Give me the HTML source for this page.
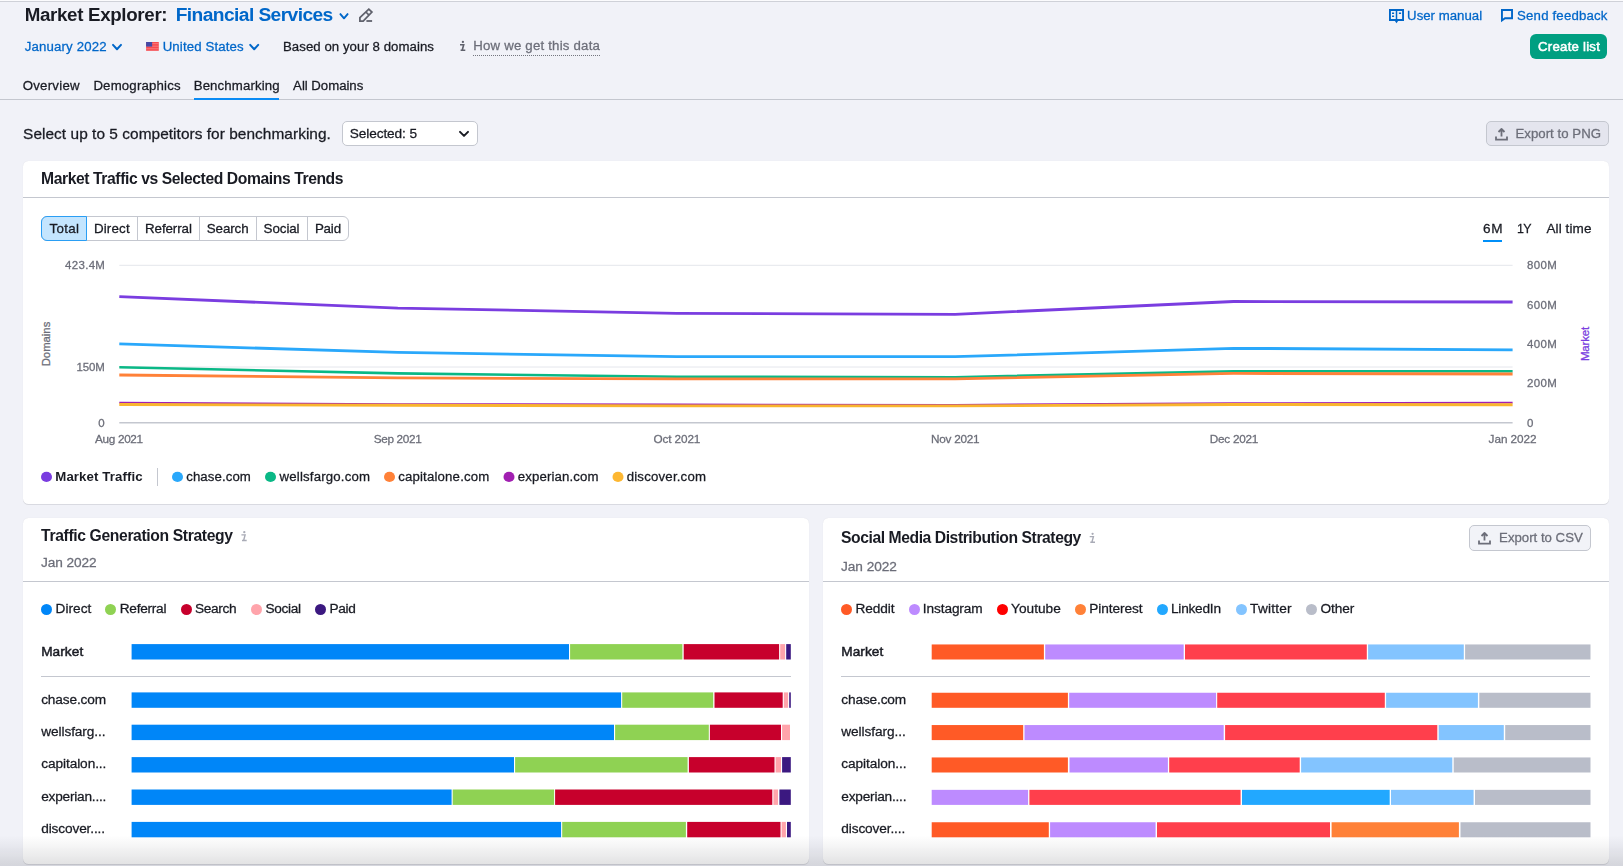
<!DOCTYPE html><html><head><meta charset="utf-8"><title>Market Explorer</title><style>
html,body{margin:0;padding:0}
body{width:1623px;height:866px;overflow:hidden;position:relative;background:#f1f2f8;font-family:"Liberation Sans",sans-serif;color:#191b23}
div,span,svg{position:absolute;box-sizing:border-box}
.t{white-space:pre;line-height:1;transform-origin:0 50%;-webkit-text-stroke:0.28px}
.card{background:#fff;border-radius:5.5px;box-shadow:0 1px 0 rgba(25,27,35,.10),0 0 1px rgba(25,27,35,.10)}
.dot{border-radius:50%;width:11px;height:11px}
</style></head><body>
<div style="left:0px;top:1px;width:1623px;height:1px;background:#cfd1d8"></div>
<div style="left:0px;top:99px;width:1623px;height:1px;background:#c4c7cf"></div>
<div style="left:194px;top:98px;width:85px;height:2px;background:#0a8bf4"></div>
<div class="card" style="left:23px;top:161px;width:1586px;height:343px"></div>
<div style="left:23px;top:197px;width:1586px;height:1px;background:#c4c7cf"></div>
<div class="card" style="left:23px;top:518px;width:786px;height:346px"></div>
<div style="left:23px;top:581px;width:786px;height:1px;background:#c4c7cf"></div>
<div class="card" style="left:823px;top:518px;width:786px;height:346px"></div>
<div style="left:823px;top:581px;width:786px;height:1px;background:#c4c7cf"></div>
<div style="left:1530px;top:34px;width:77.2px;height:24.8px;background:#009f81;border-radius:6px"></div>
<div style="left:342px;top:121px;width:136px;height:24.8px;background:#fff;border:1px solid #c4c7cf;border-radius:5px"></div>
<div style="left:1486.3px;top:121.2px;width:122.6px;height:24.5px;background:#e4e5ee;border:1px solid #c4c7cf;border-radius:5px"></div>
<div style="left:1469.3px;top:525.3px;width:121.6px;height:25.4px;background:#f2f3f8;border:1px solid #c4c7cf;border-radius:5px"></div>
<div style="left:41.3px;top:216px;width:307.4px;height:24.6px;background:#fff;border:1px solid #c4c7cf;border-radius:6px"></div>
<div style="left:137.1px;top:217px;width:1px;height:22.8px;background:#c4c7cf"></div>
<div style="left:199px;top:217px;width:1px;height:22.8px;background:#c4c7cf"></div>
<div style="left:256.2px;top:217px;width:1px;height:22.8px;background:#c4c7cf"></div>
<div style="left:307.2px;top:217px;width:1px;height:22.8px;background:#c4c7cf"></div>
<div style="left:41.3px;top:216px;width:45.7px;height:24.6px;background:#c4e5fe;border:1px solid #2a9ef4;border-radius:6px 0 0 6px"></div>
<div style="left:1483px;top:240px;width:19px;height:2px;background:#008ff8"></div>
<div style="left:473px;top:55px;width:127px;height:1px;background:repeating-linear-gradient(90deg,#74767f 0,#74767f 1px,transparent 1px,transparent 2px)"></div>
<svg width="1623" height="866" viewBox="0 0 1623 866" style="left:0;top:0">
<path d="M119.3 265.3H1512.6M119.3 367H1512.6" stroke="#e4e6ec" stroke-width="1" fill="none"/>
<path d="M119.3 422.8H1512.6" stroke="#c4c7cf" stroke-width="1.4" fill="none"/>
<polyline points="119.3,296.6 397.8,308.1 676.5,313.3 955.1,314.3 1233.6,301.5 1512.6,302" fill="none" stroke="#7a3de0" stroke-width="2.8" stroke-linejoin="round"/>
<polyline points="119.3,343.9 397.8,352.4 676.5,356.7 955.1,356.7 1233.6,348.3 1512.6,349.8" fill="none" stroke="#2aa8fb" stroke-width="2.8" stroke-linejoin="round"/>
<polyline points="119.3,367.3 397.8,373.4 676.5,376.7 955.1,377.2 1233.6,371.3 1512.6,371.3" fill="none" stroke="#0ab886" stroke-width="2.6" stroke-linejoin="round"/>
<polyline points="119.3,375 397.8,377.9 676.5,378.9 955.1,378.9 1233.6,373.4 1512.6,374" fill="none" stroke="#ff8138" stroke-width="2.8" stroke-linejoin="round"/>
<polyline points="119.3,402.6 397.8,404 676.5,404.4 955.1,404.8 1233.6,403.1 1512.6,402.6" fill="none" stroke="#a11fb1" stroke-width="1.7" stroke-linejoin="round"/>
<polyline points="119.3,404.5 397.8,405.3 676.5,405.9 955.1,405.9 1233.6,404.5 1512.6,404.7" fill="none" stroke="#f9b52e" stroke-width="2.9" stroke-linejoin="round"/>
</svg>
<span class="t" style="left:47.2px;top:343.8px;font-size:11.3px;color:#6c6e79;transform:translate(-50%,-50%) rotate(-90deg);transform-origin:50% 50%">Domains</span>
<span class="t" style="left:1585.2px;top:343.8px;font-size:11.6px;color:#7a3de0;transform:translate(-50%,-50%) rotate(-90deg);transform-origin:50% 50%;letter-spacing:-0.2px">Market</span>
<svg style="left:0;top:0" width="1623" height="866">
<ellipse cx="46.5" cy="476.9" rx="5.5" ry="5.1" fill="#7a3de0"/>
<ellipse cx="177.5" cy="476.9" rx="5.5" ry="5.1" fill="#2aa8fb"/>
<ellipse cx="270.5" cy="476.9" rx="5.5" ry="5.1" fill="#0ab886"/>
<ellipse cx="389.5" cy="476.9" rx="5.5" ry="5.1" fill="#ff8138"/>
<ellipse cx="509" cy="476.9" rx="5.5" ry="5.1" fill="#a11fb1"/>
<ellipse cx="618" cy="476.9" rx="5.5" ry="5.1" fill="#fdb731"/>
</svg>
<div style="left:157px;top:468.3px;width:1px;height:17.3px;background:#c4c7cf"></div>
<div class="dot" style="left:41px;top:603.8px;width:11px;height:11px;background:#0086f8"></div>
<div class="dot" style="left:105px;top:603.8px;width:11px;height:11px;background:#8fd253"></div>
<div class="dot" style="left:180.5px;top:603.8px;width:11px;height:11px;background:#c7002c"></div>
<div class="dot" style="left:250.8px;top:603.8px;width:11px;height:11px;background:#ffa4ab"></div>
<div class="dot" style="left:314.9px;top:603.8px;width:11px;height:11px;background:#3b1880"></div>
<div class="dot" style="left:840.9px;top:603.8px;width:11px;height:11px;background:#ff5a26"></div>
<div class="dot" style="left:908.5px;top:603.8px;width:11px;height:11px;background:#bd8bff"></div>
<div class="dot" style="left:996.9px;top:603.8px;width:11px;height:11px;background:#fe0000"></div>
<div class="dot" style="left:1075.1px;top:603.8px;width:11px;height:11px;background:#ff8138"></div>
<div class="dot" style="left:1157px;top:603.8px;width:11px;height:11px;background:#22a8ff"></div>
<div class="dot" style="left:1235.6px;top:603.8px;width:11px;height:11px;background:#83c4ff"></div>
<div class="dot" style="left:1306px;top:603.8px;width:11px;height:11px;background:#b9bdc9"></div>
<svg style="left:0;top:0" width="1623" height="866">
<rect x="131.6" y="644.1" width="437.4" height="15.4" fill="#0086f8"/>
<rect x="570.1" y="644.1" width="112.3" height="15.4" fill="#8fd253"/>
<rect x="683.7" y="644.1" width="95.4" height="15.4" fill="#c7002c"/>
<rect x="780.2" y="644.1" width="4.9" height="15.4" fill="#ffa4ab"/>
<rect x="786.2" y="644.1" width="4.6" height="15.4" fill="#3b1880"/>
<rect x="131.6" y="692.4" width="489.5" height="15.4" fill="#0086f8"/>
<rect x="622.2" y="692.4" width="91" height="15.4" fill="#8fd253"/>
<rect x="714.5" y="692.4" width="68.2" height="15.4" fill="#c7002c"/>
<rect x="783.8" y="692.4" width="4.3" height="15.4" fill="#ffa4ab"/>
<rect x="789.2" y="692.4" width="1.6" height="15.4" fill="#3b1880"/>
<rect x="131.6" y="724.7" width="482.4" height="15.4" fill="#0086f8"/>
<rect x="615.1" y="724.7" width="93.7" height="15.4" fill="#8fd253"/>
<rect x="709.9" y="724.7" width="71.1" height="15.4" fill="#c7002c"/>
<rect x="782.1" y="724.7" width="7.9" height="15.4" fill="#ffa4ab"/>
<rect x="131.6" y="757.1" width="382.4" height="15.4" fill="#0086f8"/>
<rect x="515.1" y="757.1" width="172.5" height="15.4" fill="#8fd253"/>
<rect x="688.9" y="757.1" width="85.6" height="15.4" fill="#c7002c"/>
<rect x="775.6" y="757.1" width="5.4" height="15.4" fill="#ffa4ab"/>
<rect x="782.1" y="757.1" width="8.7" height="15.4" fill="#3b1880"/>
<rect x="131.6" y="789.5" width="320" height="15.4" fill="#0086f8"/>
<rect x="452.7" y="789.5" width="101.4" height="15.4" fill="#8fd253"/>
<rect x="555.1" y="789.5" width="217.2" height="15.4" fill="#c7002c"/>
<rect x="773.4" y="789.5" width="4.6" height="15.4" fill="#ffa4ab"/>
<rect x="779.4" y="789.5" width="11.4" height="15.4" fill="#3b1880"/>
<rect x="131.6" y="821.9" width="429.5" height="15.4" fill="#0086f8"/>
<rect x="562.2" y="821.9" width="123.7" height="15.4" fill="#8fd253"/>
<rect x="687.2" y="821.9" width="93.3" height="15.4" fill="#c7002c"/>
<rect x="781.6" y="821.9" width="4.3" height="15.4" fill="#ffa4ab"/>
<rect x="787" y="821.9" width="3.8" height="15.4" fill="#3b1880"/>
</svg>
<svg style="left:0;top:0" width="1623" height="866">
<rect x="931.7" y="644.45" width="112.2" height="15.05" fill="#ff5a26"/>
<rect x="1045.2" y="644.45" width="138.5" height="15.05" fill="#bd8bff"/>
<rect x="1185" y="644.45" width="181.8" height="15.05" fill="#ff3f4c"/>
<rect x="1368.1" y="644.45" width="95.7" height="15.05" fill="#83c4ff"/>
<rect x="1465.1" y="644.45" width="125.4" height="15.05" fill="#b9bdc9"/>
<rect x="931.7" y="692.75" width="136.2" height="15.05" fill="#ff5a26"/>
<rect x="1069.2" y="692.75" width="146.9" height="15.05" fill="#bd8bff"/>
<rect x="1217.2" y="692.75" width="167.6" height="15.05" fill="#ff3f4c"/>
<rect x="1386.1" y="692.75" width="91.8" height="15.05" fill="#83c4ff"/>
<rect x="1479.3" y="692.75" width="111.2" height="15.05" fill="#b9bdc9"/>
<rect x="931.7" y="725.05" width="91.5" height="15.05" fill="#ff5a26"/>
<rect x="1024.5" y="725.05" width="199.2" height="15.05" fill="#bd8bff"/>
<rect x="1225.1" y="725.05" width="212.2" height="15.05" fill="#ff3f4c"/>
<rect x="1438.7" y="725.05" width="65.1" height="15.05" fill="#83c4ff"/>
<rect x="1505.2" y="725.05" width="85.3" height="15.05" fill="#b9bdc9"/>
<rect x="931.7" y="757.45" width="136.2" height="15.05" fill="#ff5a26"/>
<rect x="1069.5" y="757.45" width="98.4" height="15.05" fill="#bd8bff"/>
<rect x="1169.2" y="757.45" width="130.5" height="15.05" fill="#ff3f4c"/>
<rect x="1301.1" y="757.45" width="151.2" height="15.05" fill="#83c4ff"/>
<rect x="1453.7" y="757.45" width="136.8" height="15.05" fill="#b9bdc9"/>
<rect x="931.7" y="789.85" width="96.4" height="15.05" fill="#bd8bff"/>
<rect x="1029.4" y="789.85" width="211.2" height="15.05" fill="#ff3f4c"/>
<rect x="1242" y="789.85" width="147.7" height="15.05" fill="#22a8ff"/>
<rect x="1391" y="789.85" width="82.6" height="15.05" fill="#83c4ff"/>
<rect x="1475" y="789.85" width="115.5" height="15.05" fill="#b9bdc9"/>
<rect x="931.7" y="822.25" width="117.1" height="15.05" fill="#ff5a26"/>
<rect x="1050.1" y="822.25" width="105.5" height="15.05" fill="#bd8bff"/>
<rect x="1157" y="822.25" width="173" height="15.05" fill="#ff3f4c"/>
<rect x="1331.6" y="822.25" width="127.3" height="15.05" fill="#ff8138"/>
<rect x="1460.5" y="822.25" width="130" height="15.05" fill="#b9bdc9"/>
</svg>
<div style="left:41.3px;top:676px;width:749.5px;height:1px;background:#c4c7cf"></div>
<div style="left:841.4px;top:676px;width:749.1px;height:1px;background:#c4c7cf"></div>
<svg style="left:0;top:0" width="1623" height="866"><path d="M340.4 14.1L344 18.3L347.6 14.1" fill="none" stroke="#0067c9" stroke-width="1.9" stroke-linecap="round" stroke-linejoin="round"/></svg>
<svg style="left:0;top:0" width="1623" height="866"><path d="M113 44.9L117 49.2L121 44.9" fill="none" stroke="#0067c9" stroke-width="2" stroke-linecap="round" stroke-linejoin="round"/></svg>
<svg style="left:0;top:0" width="1623" height="866"><path d="M250.2 44.9L254.2 49.2L258.2 44.9" fill="none" stroke="#0067c9" stroke-width="2" stroke-linecap="round" stroke-linejoin="round"/></svg>
<svg style="left:0;top:0" width="1623" height="866"><path d="M460 131.9L464 135.9L468 131.9" fill="none" stroke="#191b23" stroke-width="2" stroke-linecap="round" stroke-linejoin="round"/></svg>
<svg style="left:0;top:0" width="1623" height="866"><path d="M368.8 9.1L371.9 12.1L363.2 21.0H359.9V17.6Z M365.9 12.0L369.0 15.1" fill="none" stroke="#5f616c" stroke-width="1.75" stroke-linejoin="miter"/><path d="M366.4 21.0H372.1" stroke="#5f616c" stroke-width="1.8"/></svg>
<svg style="left:146px;top:42.1px" width="12.9" height="8.8" viewBox="0 0 26 18"><rect width="26" height="18" fill="#f74a4f"/><path d="M0 3.4h26M0 8.6h26M0 13.8h26" stroke="#fb8f92" stroke-width="1.4"/><rect width="12.4" height="9.4" fill="#4449a6"/></svg>
<svg style="left:0;top:0" width="1623" height="866"><g transform="translate(459.9 40.8)"><circle cx="3.0" cy="1.15" r="1.15" fill="#5f616c"/><path d="M0.1 3.9H3.8L2.3 9.5M0.7 9.5H5.4" fill="none" stroke="#5f616c" stroke-width="1.6" stroke-linejoin="miter"/></g></svg>
<svg style="left:0;top:0" width="1623" height="866"><g transform="translate(241.3 531)"><circle cx="3.0" cy="1.15" r="1.15" fill="#a9abb6"/><path d="M0.1 3.9H3.8L2.3 9.5M0.7 9.5H5.4" fill="none" stroke="#a9abb6" stroke-width="1.4" stroke-linejoin="miter"/></g></svg>
<svg style="left:0;top:0" width="1623" height="866"><g transform="translate(1089.6 532.7)"><circle cx="3.0" cy="1.15" r="1.15" fill="#a9abb6"/><path d="M0.1 3.9H3.8L2.3 9.5M0.7 9.5H5.4" fill="none" stroke="#a9abb6" stroke-width="1.4" stroke-linejoin="miter"/></g></svg>
<svg style="left:1389px;top:9px" width="15" height="14.5" viewBox="0 0 15 14.5"><path d="M0.95 0.95H14.05V11.05H0.95Z" fill="none" stroke="#0066c8" stroke-width="1.9" stroke-linejoin="miter"/><path d="M7.5 0.9V12" stroke="#0066c8" stroke-width="1.5"/><path d="M5.6 11.6H9.4L7.5 14.2Z" fill="#0066c8"/><path d="M3.0 4.3h2.1M3.0 7.2h2.1M9.9 4.3h2.2" stroke="#0066c8" stroke-width="1.6"/></svg>
<svg style="left:1501px;top:9px" width="12.2" height="13.6" viewBox="0 0 12.2 13.6"><path d="M0.95 0.95H11.05V9.3H4.0L0.95 11.5Z" fill="none" stroke="#0066c8" stroke-width="1.9" stroke-linejoin="miter" stroke-miterlimit="3"/></svg>
<svg style="left:1494.7px;top:127.8px" width="13" height="13" viewBox="0 0 13 13"><path d="M6.5 8.4V1.3M3.5 4l3-3 3 3" fill="none" stroke="#6c6e79" stroke-width="1.8" stroke-linejoin="round"/><path d="M1 8.4v3.2h11V8.4" fill="none" stroke="#6c6e79" stroke-width="1.8"/></svg>
<svg style="left:1478px;top:531.6px" width="13" height="13" viewBox="0 0 13 13"><path d="M6.5 8.4V1.3M3.5 4l3-3 3 3" fill="none" stroke="#6c6e79" stroke-width="1.8" stroke-linejoin="round"/><path d="M1 8.4v3.2h11V8.4" fill="none" stroke="#6c6e79" stroke-width="1.8"/></svg>
<div style="left:0;top:0;width:1623px;height:866px;will-change:transform">
<span class="t" style="left:24.7px;top:6.0px;font-size:18.75px;color:#191b23;font-weight:700;-webkit-text-stroke:0;letter-spacing:-0.338px;">Market Explorer:</span>
<span class="t" style="left:175.7px;top:4.8px;font-size:19.19px;color:#0067c9;font-weight:700;-webkit-text-stroke:0;letter-spacing:-0.580px;">Financial Services</span>
<span class="t" style="left:24.7px;top:39.7px;font-size:13.23px;color:#0067c9;letter-spacing:0.163px;">January 2022</span>
<span class="t" style="left:162.7px;top:39.7px;font-size:13.23px;color:#0067c9;letter-spacing:0.128px;">United States</span>
<span class="t" style="left:283.0px;top:39.7px;font-size:13.23px;color:#191b23;letter-spacing:0.045px;">Based on your 8 domains</span>
<span class="t" style="left:473.2px;top:38.8px;font-size:13.23px;color:#6c6e79;letter-spacing:0.210px;">How we get this data</span>
<span class="t" style="left:1407.1px;top:8.6px;font-size:13.23px;color:#0067c9;letter-spacing:0.006px;">User manual</span>
<span class="t" style="left:1517.1px;top:8.6px;font-size:13.23px;color:#0067c9;letter-spacing:0.175px;">Send feedback</span>
<span class="t" style="left:1538.1px;top:39.7px;font-size:13.23px;color:#ffffff;-webkit-text-stroke:0.5px #ffffff;letter-spacing:0.228px;">Create list</span>
<span class="t" style="left:22.7px;top:78.8px;font-size:13.23px;color:#191b23;letter-spacing:0.258px;">Overview</span>
<span class="t" style="left:93.4px;top:78.8px;font-size:13.23px;color:#191b23;letter-spacing:0.179px;">Demographics</span>
<span class="t" style="left:193.7px;top:78.8px;font-size:13.23px;color:#191b23;letter-spacing:0.127px;">Benchmarking</span>
<span class="t" style="left:293.1px;top:78.8px;font-size:13.23px;color:#191b23;letter-spacing:-0.033px;">All Domains</span>
<span class="t" style="left:23.1px;top:125.9px;font-size:15.41px;color:#191b23;letter-spacing:0.048px;">Select up to 5 competitors for benchmarking.</span>
<span class="t" style="left:349.7px;top:126.7px;font-size:13.66px;color:#191b23;letter-spacing:-0.093px;">Selected: 5</span>
<span class="t" style="left:1515.4px;top:126.7px;font-size:13.23px;color:#6c6e79;letter-spacing:0.032px;">Export to PNG</span>
<span class="t" style="left:41.0px;top:170.9px;font-size:15.70px;color:#191b23;font-weight:700;-webkit-text-stroke:0;letter-spacing:-0.415px;">Market Traffic vs Selected Domains Trends</span>
<span class="t" style="left:49.4px;top:221.9px;font-size:13.37px;color:#191b23;letter-spacing:0.320px;">Total</span>
<span class="t" style="left:93.9px;top:221.9px;font-size:13.37px;color:#191b23;letter-spacing:0.182px;">Direct</span>
<span class="t" style="left:145.0px;top:221.9px;font-size:13.37px;color:#191b23;letter-spacing:-0.088px;">Referral</span>
<span class="t" style="left:206.8px;top:221.9px;font-size:13.37px;color:#191b23;letter-spacing:-0.109px;">Search</span>
<span class="t" style="left:263.6px;top:221.9px;font-size:13.37px;color:#191b23;letter-spacing:-0.078px;">Social</span>
<span class="t" style="left:314.9px;top:221.9px;font-size:13.37px;color:#191b23;letter-spacing:-0.183px;">Paid</span>
<span class="t" style="left:1482.8px;top:221.5px;font-size:13.52px;color:#191b23;letter-spacing:0.750px;transform:scaleX(1.004);">6M</span>
<span class="t" style="left:1517.2px;top:221.5px;font-size:13.52px;color:#191b23;letter-spacing:-0.750px;transform:scaleX(0.918);">1Y</span>
<span class="t" style="left:1546.5px;top:221.5px;font-size:13.52px;color:#191b23;letter-spacing:0.084px;">All time</span>
<span class="t" style="left:65.1px;top:260.3px;font-size:11.48px;color:#6c6e79;letter-spacing:0.307px;">423.4M</span>
<span class="t" style="left:76.6px;top:362.3px;font-size:11.48px;color:#6c6e79;letter-spacing:-0.134px;">150M</span>
<span class="t" style="left:98.3px;top:418.3px;font-size:11.48px;color:#6c6e79;">0</span>
<span class="t" style="left:1526.9px;top:260.3px;font-size:11.48px;color:#6c6e79;letter-spacing:0.432px;">800M</span>
<span class="t" style="left:1526.9px;top:300.3px;font-size:11.48px;color:#6c6e79;letter-spacing:0.432px;">600M</span>
<span class="t" style="left:1526.9px;top:338.6px;font-size:11.48px;color:#6c6e79;letter-spacing:0.432px;">400M</span>
<span class="t" style="left:1526.9px;top:378.2px;font-size:11.48px;color:#6c6e79;letter-spacing:0.432px;">200M</span>
<span class="t" style="left:1526.9px;top:418.0px;font-size:11.48px;color:#6c6e79;">0</span>
<span class="t" style="left:95.1px;top:433.1px;font-size:11.77px;color:#6c6e79;letter-spacing:-0.342px;">Aug 2021</span>
<span class="t" style="left:373.7px;top:433.1px;font-size:11.77px;color:#6c6e79;letter-spacing:-0.342px;">Sep 2021</span>
<span class="t" style="left:653.4px;top:433.1px;font-size:11.77px;color:#6c6e79;letter-spacing:-0.107px;">Oct 2021</span>
<span class="t" style="left:931.1px;top:433.1px;font-size:11.77px;color:#6c6e79;letter-spacing:-0.282px;">Nov 2021</span>
<span class="t" style="left:1209.8px;top:433.1px;font-size:11.77px;color:#6c6e79;letter-spacing:-0.254px;">Dec 2021</span>
<span class="t" style="left:1488.6px;top:433.1px;font-size:11.77px;color:#6c6e79;letter-spacing:-0.060px;">Jan 2022</span>
<span class="t" style="left:55.3px;top:470.0px;font-size:13.23px;color:#191b23;font-weight:700;-webkit-text-stroke:0;letter-spacing:0.102px;">Market Traffic</span>
<span class="t" style="left:186.2px;top:470.0px;font-size:13.23px;color:#191b23;letter-spacing:0.097px;">chase.com</span>
<span class="t" style="left:279.6px;top:470.0px;font-size:13.23px;color:#191b23;letter-spacing:0.173px;">wellsfargo.com</span>
<span class="t" style="left:398.2px;top:470.0px;font-size:13.23px;color:#191b23;letter-spacing:0.168px;">capitalone.com</span>
<span class="t" style="left:517.8px;top:470.0px;font-size:13.23px;color:#191b23;letter-spacing:0.113px;">experian.com</span>
<span class="t" style="left:626.7px;top:470.0px;font-size:13.23px;color:#191b23;letter-spacing:0.196px;">discover.com</span>
<span class="t" style="left:41.1px;top:528.0px;font-size:15.70px;color:#191b23;font-weight:700;-webkit-text-stroke:0;letter-spacing:-0.365px;">Traffic Generation Strategy</span>
<span class="t" style="left:41.1px;top:555.6px;font-size:13.66px;color:#6c6e79;letter-spacing:-0.115px;">Jan 2022</span>
<span class="t" style="left:55.6px;top:601.9px;font-size:13.66px;color:#191b23;letter-spacing:0.006px;">Direct</span>
<span class="t" style="left:119.7px;top:601.9px;font-size:13.66px;color:#191b23;letter-spacing:-0.254px;">Referral</span>
<span class="t" style="left:194.9px;top:601.9px;font-size:13.66px;color:#191b23;letter-spacing:-0.336px;">Search</span>
<span class="t" style="left:265.4px;top:601.9px;font-size:13.66px;color:#191b23;letter-spacing:-0.301px;">Social</span>
<span class="t" style="left:329.4px;top:601.9px;font-size:13.66px;color:#191b23;letter-spacing:-0.315px;">Paid</span>
<span class="t" style="left:841.0px;top:530.0px;font-size:15.70px;color:#191b23;font-weight:700;-webkit-text-stroke:0;letter-spacing:-0.431px;">Social Media Distribution Strategy</span>
<span class="t" style="left:841.0px;top:559.5px;font-size:13.66px;color:#6c6e79;letter-spacing:-0.043px;">Jan 2022</span>
<span class="t" style="left:1499.1px;top:530.8px;font-size:13.23px;color:#6c6e79;letter-spacing:-0.005px;">Export to CSV</span>
<span class="t" style="left:855.6px;top:601.9px;font-size:13.66px;color:#191b23;letter-spacing:-0.117px;">Reddit</span>
<span class="t" style="left:922.8px;top:601.9px;font-size:13.66px;color:#191b23;letter-spacing:-0.104px;">Instagram</span>
<span class="t" style="left:1011.1px;top:601.9px;font-size:13.66px;color:#191b23;letter-spacing:0.013px;">Youtube</span>
<span class="t" style="left:1089.2px;top:601.9px;font-size:13.66px;color:#191b23;letter-spacing:-0.063px;">Pinterest</span>
<span class="t" style="left:1171.0px;top:601.9px;font-size:13.66px;color:#191b23;letter-spacing:-0.234px;">LinkedIn</span>
<span class="t" style="left:1250.1px;top:601.9px;font-size:13.66px;color:#191b23;letter-spacing:0.197px;">Twitter</span>
<span class="t" style="left:1320.4px;top:601.9px;font-size:13.66px;color:#191b23;letter-spacing:-0.039px;">Other</span>
<span class="t" style="left:41.2px;top:644.8px;font-size:13.66px;color:#191b23;-webkit-text-stroke:0.5px #191b23;letter-spacing:0.050px;">Market</span>
<span class="t" style="left:41.2px;top:692.8px;font-size:13.66px;color:#191b23;letter-spacing:-0.143px;">chase.com</span>
<span class="t" style="left:41.2px;top:724.7px;font-size:13.66px;color:#191b23;letter-spacing:-0.080px;">wellsfarg...</span>
<span class="t" style="left:41.2px;top:757.4px;font-size:13.66px;color:#191b23;letter-spacing:-0.078px;">capitalon...</span>
<span class="t" style="left:41.2px;top:789.5px;font-size:13.66px;color:#191b23;letter-spacing:-0.215px;">experian....</span>
<span class="t" style="left:41.2px;top:821.7px;font-size:13.66px;color:#191b23;letter-spacing:-0.126px;">discover....</span>
<span class="t" style="left:841.3px;top:644.8px;font-size:13.66px;color:#191b23;-webkit-text-stroke:0.5px #191b23;letter-spacing:0.050px;">Market</span>
<span class="t" style="left:841.3px;top:692.8px;font-size:13.66px;color:#191b23;letter-spacing:-0.143px;">chase.com</span>
<span class="t" style="left:841.3px;top:724.7px;font-size:13.66px;color:#191b23;letter-spacing:-0.080px;">wellsfarg...</span>
<span class="t" style="left:841.3px;top:757.4px;font-size:13.66px;color:#191b23;letter-spacing:-0.078px;">capitalon...</span>
<span class="t" style="left:841.3px;top:789.5px;font-size:13.66px;color:#191b23;letter-spacing:-0.215px;">experian....</span>
<span class="t" style="left:841.3px;top:821.7px;font-size:13.66px;color:#191b23;letter-spacing:-0.126px;">discover....</span>
</div>
<div style="left:0px;top:0px;width:1623px;height:1px;background:#fbfbfd"></div>
<div style="left:0px;top:836px;width:1623px;height:30px;background:linear-gradient(rgba(20,22,30,0),rgba(20,22,30,.05) 40%,rgba(20,22,30,.13))"></div>
</body></html>
